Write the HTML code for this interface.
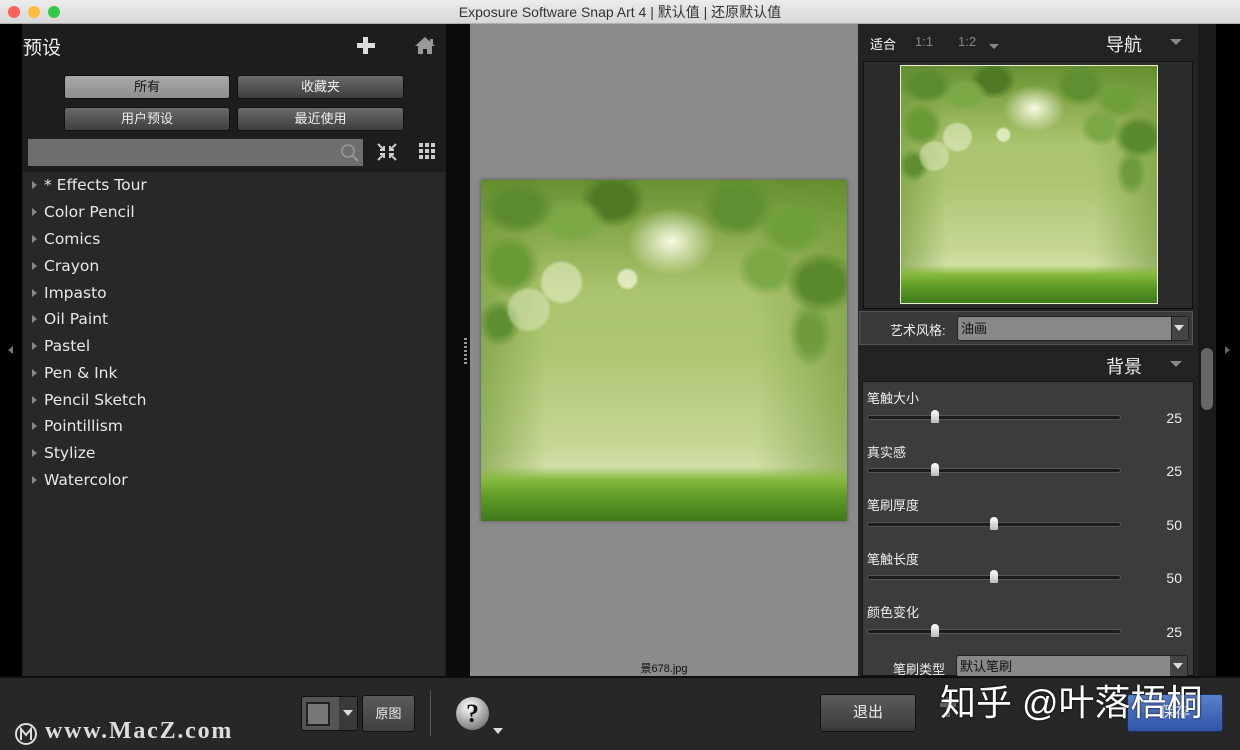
<!DOCTYPE html>
<html><head><meta charset="utf-8">
<style>
*{margin:0;padding:0;box-sizing:border-box}
body{width:1240px;height:750px;overflow:hidden;background:#000;font-family:"Liberation Sans","Noto Sans CJK SC",sans-serif;position:relative;color:#ddd}
.a{position:absolute}
.img{background:
 radial-gradient(ellipse 12% 10% at 52% 18%, rgba(255,255,235,.95), rgba(255,255,220,0) 100%),
 radial-gradient(circle at 22% 30%, rgba(235,242,205,.55) 0 5%, transparent 6%),
 radial-gradient(circle at 13% 38%, rgba(235,242,205,.45) 0 5%, transparent 6%),
 radial-gradient(circle at 40% 29%, rgba(245,250,225,.7) 0 2.5%, transparent 3.5%),
 radial-gradient(ellipse 10% 8% at 10% 8%, #5d8c2e 0 60%, transparent 100%),
 radial-gradient(ellipse 9% 7% at 25% 12%, #7aa845 0 60%, transparent 100%),
 radial-gradient(ellipse 8% 9% at 8% 25%, #6a9a35 0 60%, transparent 100%),
 radial-gradient(ellipse 9% 8% at 36% 6%, #4e7a25 0 60%, transparent 100%),
 radial-gradient(ellipse 10% 9% at 70% 8%, #5f8f30 0 60%, transparent 100%),
 radial-gradient(ellipse 9% 8% at 85% 14%, #6f9f3a 0 60%, transparent 100%),
 radial-gradient(ellipse 10% 9% at 93% 30%, #5a8a2c 0 60%, transparent 100%),
 radial-gradient(ellipse 8% 8% at 78% 26%, #7aa845 0 60%, transparent 100%),
 radial-gradient(ellipse 6% 10% at 90% 45%, #6e9c3a 0 50%, transparent 100%),
 radial-gradient(ellipse 6% 7% at 5% 42%, #5e8e30 0 50%, transparent 100%),
 linear-gradient(to top,#3f7a1a 0,#5e9c28 7%,#86b83d 12%,rgba(200,220,150,0) 16%),
 linear-gradient(to bottom,rgba(95,140,45,.9) 0,rgba(115,155,58,.6) 15%,rgba(140,170,80,0) 32%),
 linear-gradient(to right,rgba(110,150,55,.6) 0,rgba(120,160,60,0) 18%,rgba(120,160,60,0) 75%,rgba(110,150,55,.6) 100%),
 linear-gradient(to bottom,#a4be62 0%,#aec673 50%,#c6d795 78%,#d5e1ac 86%);}
.btn{position:absolute;height:24px;border-radius:3px;border:1px solid #111;background:linear-gradient(#6a6a6a,#3e3e3e);color:#eee;font-size:13px;text-align:center;line-height:22px}
.li{position:absolute;left:32px;font-size:15.5px;color:#e8e8e8;font-family:"DejaVu Sans",sans-serif}
.li:before{content:"";position:absolute;left:0;top:5px;border-left:5px solid #888;border-top:4px solid transparent;border-bottom:4px solid transparent}
.li span{margin-left:12px}
.lab{position:absolute;left:867px;font-size:13px;color:#eee}
.tr{position:absolute;left:867px;width:254px;height:5px;border-radius:3px;background:#1c1c1c;border:1px solid #555}
.th{position:absolute;width:8px;height:13px;background:linear-gradient(#fff,#bbb);border-radius:4px 4px 1px 1px}
.val{position:absolute;left:1150px;width:32px;text-align:right;font-size:14px;color:#eee}
</style></head><body>
<div class="a" style="left:0;top:0;width:1240px;height:24px;background:linear-gradient(#ececec,#d8d8d8);border-bottom:1px solid #b0b0b0;text-align:center;font-size:14px;line-height:24px;color:#333">Exposure Software Snap Art 4 | 默认值 | 还原默认值</div>
<div class="a" style="left:8px;top:6px;width:12px;height:12px;border-radius:6px;background:#fc605b"></div>
<div class="a" style="left:28px;top:6px;width:12px;height:12px;border-radius:6px;background:#fdbc40"></div>
<div class="a" style="left:48px;top:6px;width:12px;height:12px;border-radius:6px;background:#34c84a"></div>
<div class="a" style="left:0;top:24px;width:22px;height:652px;background:#000"></div>
<div class="a" style="left:8px;top:346px;border-right:5px solid #777;border-top:4px solid transparent;border-bottom:4px solid transparent"></div>
<div class="a" style="left:22px;top:24px;width:424px;height:652px;background:#1d1d1d"></div>
<div class="a" style="left:23px;top:33px;font-size:19px;color:#eee">预设</div>
<div class="a" style="left:357px;top:43px;width:18px;height:5px;background:#ddd"></div>
<div class="a" style="left:363px;top:37px;width:5px;height:17px;background:#ddd"></div>
<svg class="a" style="left:414px;top:36px" width="22" height="19"><path d="M11 1 L21 10 L18 10 L18 18 L13 18 L13 13 L9 13 L9 18 L4 18 L4 10 L1 10 Z M16 3 h3 v5 h-3z" fill="#999"/></svg>
<div class="btn" style="left:64px;top:75px;width:166px;background:linear-gradient(#a8a8a8,#8e8e8e);color:#111">所有</div>
<div class="btn" style="left:237px;top:75px;width:167px">收藏夹</div>
<div class="btn" style="left:64px;top:107px;width:166px">用户预设</div>
<div class="btn" style="left:237px;top:107px;width:167px">最近使用</div>
<div class="a" style="left:28px;top:139px;width:335px;height:27px;background:#6e6e6e"></div>
<svg class="a" style="left:340px;top:143px" width="20" height="20"><circle cx="8" cy="8" r="6" fill="none" stroke="#999" stroke-width="1.5"/><path d="M12 12 L18 18" stroke="#999" stroke-width="2"/></svg>
<svg class="a" style="left:376px;top:142px" width="22" height="20"><g stroke="#ccc" stroke-width="2" fill="none"><path d="M2 2 L8 8 M8 4 V8 H4"/><path d="M20 2 L14 8 M14 4 V8 H18"/><path d="M2 18 L8 12 M8 16 V12 H4"/><path d="M20 18 L14 12 M14 16 V12 H18"/></g></svg>
<svg class="a" style="left:419px;top:143px" width="18" height="17"><g fill="#ccc"><rect x="0" y="0" width="4" height="4"/><rect x="6" y="0" width="4" height="4"/><rect x="12" y="0" width="4" height="4"/><rect x="0" y="6" width="4" height="4"/><rect x="6" y="6" width="4" height="4"/><rect x="12" y="6" width="4" height="4"/><rect x="0" y="12" width="4" height="4"/><rect x="6" y="12" width="4" height="4"/><rect x="12" y="12" width="4" height="4"/></g></svg>
<div class="a" style="left:23px;top:172px;width:422px;height:504px;background:#282828"></div>
<div class="li" style="top:176px"><span>* Effects Tour</span></div>
<div class="li" style="top:203px"><span>Color Pencil</span></div>
<div class="li" style="top:230px"><span>Comics</span></div>
<div class="li" style="top:257px"><span>Crayon</span></div>
<div class="li" style="top:284px"><span>Impasto</span></div>
<div class="li" style="top:310px"><span>Oil Paint</span></div>
<div class="li" style="top:337px"><span>Pastel</span></div>
<div class="li" style="top:364px"><span>Pen &amp; Ink</span></div>
<div class="li" style="top:391px"><span>Pencil Sketch</span></div>
<div class="li" style="top:417px"><span>Pointillism</span></div>
<div class="li" style="top:444px"><span>Stylize</span></div>
<div class="li" style="top:471px"><span>Watercolor</span></div>
<div class="a" style="left:446px;top:24px;width:24px;height:652px;background:#0b0b0b"></div>
<div class="a" style="left:464px;top:338px;width:3px;height:26px;background:repeating-linear-gradient(#999 0 2px,transparent 2px 4px)"></div>
<div class="a" style="left:470px;top:24px;width:388px;height:652px;background:#8b8b8b"></div>
<div class="a img" style="left:481px;top:180px;width:366px;height:341px;box-shadow:0 0 4px #555"></div>
<div class="a" style="left:470px;top:660px;width:388px;text-align:center;font-size:11px;color:#111">景678.jpg</div>
<div class="a" style="left:858px;top:24px;width:340px;height:652px;background:#232323"></div>
<div class="a" style="left:870px;top:34px;font-size:13px;color:#fff">适合</div>
<div class="a" style="left:915px;top:34px;font-size:13px;color:#888">1:1</div>
<div class="a" style="left:958px;top:34px;font-size:13px;color:#888">1:2</div>
<div class="a" style="left:989px;top:44px;border-top:5px solid #888;border-left:5px solid transparent;border-right:5px solid transparent"></div>
<div class="a" style="left:1106px;top:31px;font-size:18px;color:#eee">导航</div>
<div class="a" style="left:1170px;top:39px;border-top:6px solid #888;border-left:6px solid transparent;border-right:6px solid transparent"></div>
<div class="a" style="left:863px;top:61px;width:330px;height:248px;background:#2b2b2b;border:1px solid #111"></div>
<div class="a img" style="left:900px;top:65px;width:258px;height:239px;border:1px solid #e8f0d0"></div>
<div class="a" style="left:859px;top:311px;width:334px;height:34px;background:#3a3a3a;border:1px solid #555"></div>
<div class="a" style="left:890px;top:320px;font-size:13px;color:#eee">艺术风格:</div>
<div class="a" style="left:957px;top:316px;width:232px;height:25px;background:#888;border:1px solid #222;border-radius:3px;font-size:13px;color:#111;line-height:23px;padding-left:3px">油画</div>
<div class="a" style="left:1171px;top:317px;width:17px;height:23px;background:#444;border-left:1px solid #222"></div>
<div class="a" style="left:1174px;top:325px;border-top:6px solid #ddd;border-left:5px solid transparent;border-right:5px solid transparent"></div>
<div class="a" style="left:1106px;top:353px;font-size:18px;color:#eee">背景</div>
<div class="a" style="left:1170px;top:361px;border-top:6px solid #888;border-left:6px solid transparent;border-right:6px solid transparent"></div>
<div class="a" style="left:862px;top:381px;width:332px;height:295px;background:#3c3c3c;border:1px solid #151515"></div>
<div class="lab" style="top:388px">笔触大小</div><div class="tr" style="top:415px"></div><div class="th" style="left:931px;top:410px"></div><div class="val" style="top:410px">25</div>
<div class="lab" style="top:442px">真实感</div><div class="tr" style="top:468px"></div><div class="th" style="left:931px;top:463px"></div><div class="val" style="top:463px">25</div>
<div class="lab" style="top:495px">笔刷厚度</div><div class="tr" style="top:522px"></div><div class="th" style="left:990px;top:517px"></div><div class="val" style="top:517px">50</div>
<div class="lab" style="top:549px">笔触长度</div><div class="tr" style="top:575px"></div><div class="th" style="left:990px;top:570px"></div><div class="val" style="top:570px">50</div>
<div class="lab" style="top:602px">颜色变化</div><div class="tr" style="top:629px"></div><div class="th" style="left:931px;top:624px"></div><div class="val" style="top:624px">25</div>
<div class="a" style="left:893px;top:659px;font-size:13px;color:#eee">笔刷类型</div>
<div class="a" style="left:956px;top:655px;width:232px;height:22px;background:#888;border:1px solid #222;border-radius:3px;font-size:13px;color:#111;line-height:22px;padding-left:3px">默认笔刷</div>
<div class="a" style="left:1170px;top:656px;width:17px;height:20px;background:#444"></div>
<div class="a" style="left:1173px;top:663px;border-top:6px solid #ddd;border-left:5px solid transparent;border-right:5px solid transparent"></div>
<div class="a" style="left:1198px;top:24px;width:18px;height:652px;background:#1a1a1a"></div>
<div class="a" style="left:1201px;top:348px;width:12px;height:62px;border-radius:6px;background:#666"></div>
<div class="a" style="left:1216px;top:24px;width:24px;height:652px;background:#000"></div>
<div class="a" style="left:1225px;top:346px;border-left:5px solid #666;border-top:4px solid transparent;border-bottom:4px solid transparent"></div>
<div class="a" style="left:0;top:676px;width:1240px;height:74px;background:#272727;border-top:2px solid #0e0e0e"></div>
<svg class="a" style="left:13px;top:721px" width="26" height="26"><circle cx="13" cy="13" r="10" fill="none" stroke="#ddd" stroke-width="2"/><path d="M8 19 V8 L13 14 L18 8 V19" fill="none" stroke="#ddd" stroke-width="2"/></svg>
<div class="a" style="left:45px;top:718px;font-family:'Liberation Serif',serif;font-size:24px;font-weight:bold;color:#ddd;letter-spacing:1.8px">www.MacZ.com</div>
<div class="a" style="left:301px;top:696px;width:57px;height:35px;background:#555;border:1px solid #111;border-radius:3px"></div>
<div class="a" style="left:306px;top:702px;width:24px;height:24px;background:#777;border:2px solid #222"></div>
<div class="a" style="left:339px;top:697px;width:18px;height:33px;background:#3a3a3a"></div>
<div class="a" style="left:343px;top:710px;border-top:6px solid #ddd;border-left:5px solid transparent;border-right:5px solid transparent"></div>
<div class="btn" style="left:362px;top:695px;width:53px;height:37px;line-height:35px;background:linear-gradient(#5a5a5a,#404040)">原图</div>
<div class="a" style="left:430px;top:690px;width:1px;height:46px;background:#555"></div>
<div class="a" style="left:456px;top:697px;width:33px;height:33px;border-radius:50%;background:radial-gradient(circle at 40% 30%,#fff,#999 60%,#555);color:#111;font-size:26px;font-weight:bold;text-align:center;line-height:33px;font-family:'Liberation Serif',serif">?</div>
<div class="a" style="left:493px;top:728px;border-top:6px solid #ddd;border-left:5px solid transparent;border-right:5px solid transparent"></div>
<div class="btn" style="left:820px;top:694px;width:96px;height:38px;line-height:36px;font-size:15px;background:linear-gradient(#5c5c5c,#3a3a3a)">退出</div>
<div class="a" style="left:940px;top:703px;width:16px;height:4px;background:#666"></div>
<div class="a" style="left:946px;top:697px;width:4px;height:20px;background:#666"></div>
<div class="btn" style="left:1127px;top:694px;width:96px;height:38px;line-height:36px;font-size:15px;background:linear-gradient(#5b80cc,#2f55a8);border-color:#1a3060">保存</div>
<div class="a" style="left:940px;top:674px;font-size:36px;color:#fff;text-shadow:0 0 2px #000">知乎 @叶落梧桐</div>
</body></html>
